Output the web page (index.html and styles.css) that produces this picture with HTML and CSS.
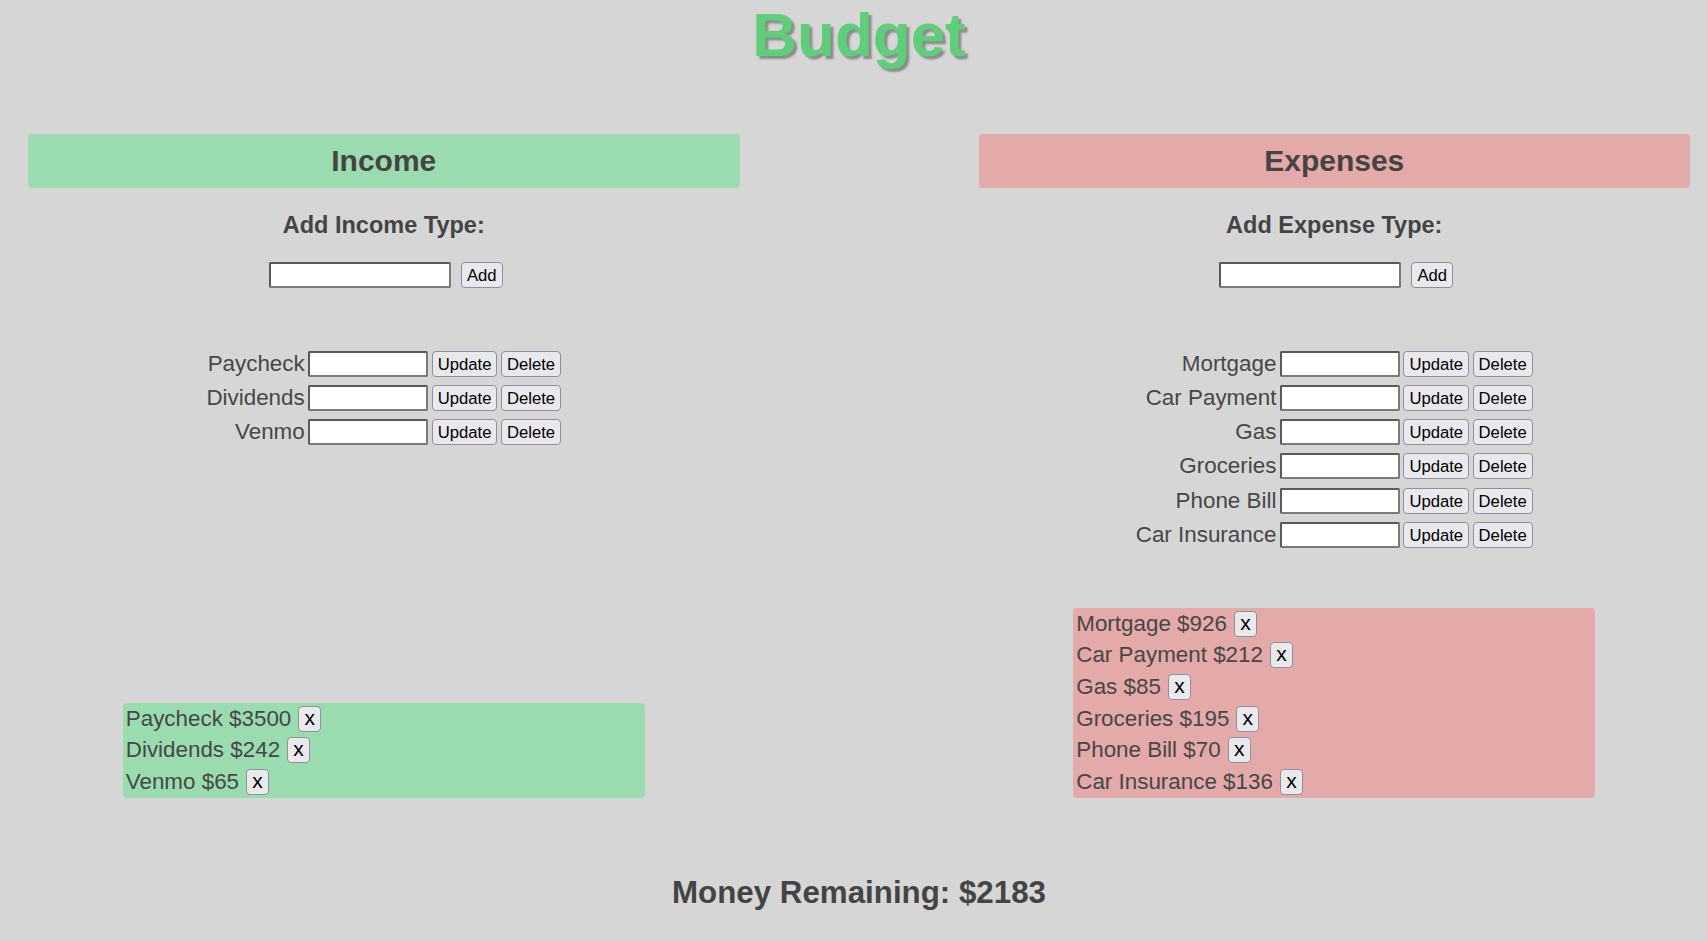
FILE: index.html
```html
<!DOCTYPE html>
<html lang="en">
<head>
<meta charset="utf-8">
<title>Budget</title>
<link rel="stylesheet" href="styles.css">
</head>
<body>
<div class="page">
  <h1 class="title">Budget</h1>
  <div class="columns">
    <section class="col">
      <h2 class="bar bar-income">Income</h2>
      <h3 class="add-title">Add Income Type:</h3>
      <div class="add-row"><input class="add-input" type="text"><button class="btn">Add</button></div>
      <div class="types">
        <span class="type-label">Paycheck</span><input class="type-input" type="text"><button class="btn">Update</button><button class="btn">Delete</button>
        <span class="type-label">Dividends</span><input class="type-input" type="text"><button class="btn">Update</button><button class="btn">Delete</button>
        <span class="type-label">Venmo</span><input class="type-input" type="text"><button class="btn">Update</button><button class="btn">Delete</button>
      </div>
      <div class="list list-income">
        <div class="item">Paycheck $3500<button class="x">x</button></div>
        <div class="item">Dividends $242<button class="x">x</button></div>
        <div class="item">Venmo $65<button class="x">x</button></div>
      </div>
    </section>
    <section class="col">
      <h2 class="bar bar-expense">Expenses</h2>
      <h3 class="add-title">Add Expense Type:</h3>
      <div class="add-row"><input class="add-input" type="text"><button class="btn">Add</button></div>
      <div class="types">
        <span class="type-label">Mortgage</span><input class="type-input" type="text"><button class="btn">Update</button><button class="btn">Delete</button>
        <span class="type-label">Car Payment</span><input class="type-input" type="text"><button class="btn">Update</button><button class="btn">Delete</button>
        <span class="type-label">Gas</span><input class="type-input" type="text"><button class="btn">Update</button><button class="btn">Delete</button>
        <span class="type-label">Groceries</span><input class="type-input" type="text"><button class="btn">Update</button><button class="btn">Delete</button>
        <span class="type-label">Phone Bill</span><input class="type-input" type="text"><button class="btn">Update</button><button class="btn">Delete</button>
        <span class="type-label">Car Insurance</span><input class="type-input" type="text"><button class="btn">Update</button><button class="btn">Delete</button>
      </div>
      <div class="list list-expense">
        <div class="item">Mortgage $926<button class="x">x</button></div>
        <div class="item">Car Payment $212<button class="x">x</button></div>
        <div class="item">Gas $85<button class="x">x</button></div>
        <div class="item">Groceries $195<button class="x">x</button></div>
        <div class="item">Phone Bill $70<button class="x">x</button></div>
        <div class="item">Car Insurance $136<button class="x">x</button></div>
      </div>
    </section>
  </div>
  <h2 class="remaining">Money Remaining: $2183</h2>
</div>
</body>
</html>
```
FILE: styles.css
```css
html, body {
  margin: 0;
  padding: 0;
}
body {
  background: #d6d6d6;
  font-family: "Liberation Sans", Arial, sans-serif;
  color: #474747;
}
.page {
  padding: 0 17px 0 28px;
}
.title {
  margin: 0;
  text-align: center;
  font-size: 62px;
  line-height: 70px;
  font-weight: bold;
  color: #5fce78;
  text-shadow: 3px 3px 2px #8c8c8c;
}
.columns {
  display: flex;
  justify-content: space-between;
  margin-top: 64px;
}
.col {
  width: 711.5px;
  display: flex;
  flex-direction: column;
  align-items: center;
}
.bar {
  align-self: stretch;
  margin: 0;
  height: 54px;
  line-height: 54px;
  text-align: center;
  font-size: 30px;
  font-weight: bold;
  border-radius: 4px;
  color: #444;
}
.bar-income { background: #9adcb0; }
.bar-expense { background: #e4a9a9; }
.add-title {
  margin: 24px 0 0;
  font-size: 23.5px;
  line-height: 26px;
  font-weight: bold;
  color: #444;
}
.add-row {
  margin-top: 24.4px;
  display: flex;
  gap: 10px;
  margin-left: 4px;
}
input {
  box-sizing: border-box;
  height: 26px;
  margin: 0;
  padding: 0 3px;
  background: #fff;
  border: 2px solid;
  border-color: #595959 #7a7a7a #7a7a7a #595959;
  border-radius: 2px;
}
.add-input { width: 182px; }
.type-input { width: 120px; }
.btn {
  box-sizing: border-box;
  height: 26px;
  margin: 0;
  padding: 1px 5px 0;
  font-family: "Liberation Sans", Arial, sans-serif;
  font-size: 16.67px;
  line-height: 23px;
  color: #000;
  background: #e9e9ed;
  border: 1px solid #8f8f9d;
  border-radius: 4px;
}
.types {
  margin-top: 62.5px;
  margin-bottom: 60px;
  display: grid;
  grid-template-columns: auto auto auto auto;
  column-gap: 3.5px;
  row-gap: 8.2px;
  align-items: center;
}
.type-label {
  justify-self: end;
  font-size: 22.4px;
  line-height: 26px;
}
.list {
  margin-top: auto;
  width: 522px;
  box-sizing: border-box;
  padding: 0 3px;
  border-radius: 4px;
}
.list-income { background: #9adcb0; }
.list-expense { background: #e4a9a9; }
.item {
  height: 31.7px;
  display: flex;
  align-items: center;
  gap: 7px;
  font-size: 22.4px;
}
.x {
  box-sizing: border-box;
  width: 23px;
  height: 26px;
  margin: 0;
  padding: 0 0 2px;
  font-family: "Liberation Sans", Arial, sans-serif;
  font-size: 21px;
  line-height: 22px;
  color: #000;
  background: #e9e9ed;
  border: 1px solid #8f8f9d;
  border-radius: 4px;
}
.remaining {
  margin: 78px 0 0;
  text-align: center;
  font-size: 31.3px;
  line-height: 34.5px;
  font-weight: bold;
  color: #444;
}
```
